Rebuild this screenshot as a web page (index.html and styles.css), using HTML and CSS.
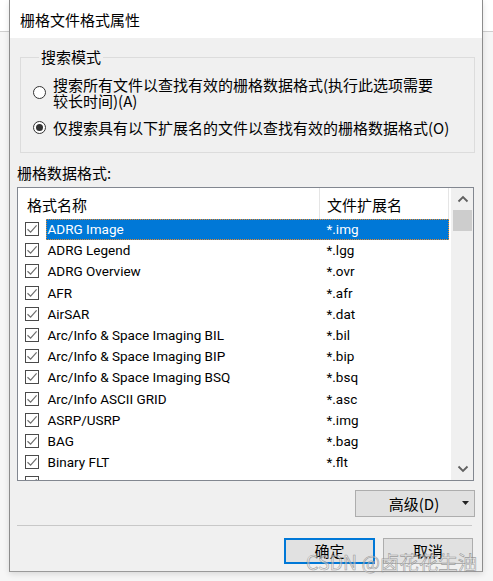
FILE: index.html
```html
<!DOCTYPE html>
<html lang="zh-CN">
<head>
<meta charset="utf-8">
<title>栅格文件格式属性</title>
<link rel="stylesheet" href="styles.css">
</head>
<body>
<div class="screen">
  <div class="dialog">
    <div class="titlebar">栅格文件格式属性</div>
    <div class="content">
      <fieldset class="group">
        <legend class="legend">搜索模式</legend>
        <div class="radio-row">
          <span class="radio"></span>
          <span class="radio-text">搜索所有文件以查找有效的栅格数据格式(执行此选项需要<br>较长时间)(A)</span>
        </div>
        <div class="radio-row second">
          <span class="radio checked"></span>
          <span class="radio-text">仅搜索具有以下扩展名的文件以查找有效的栅格数据格式(O)</span>
        </div>
      </fieldset>

      <div class="list-label">栅格数据格式:</div>

      <div class="listbox">
        <div class="list-main">
          <div class="list-header">
            <div class="hcol hname">格式名称</div>
            <div class="hcol hext">文件扩展名</div>
          </div>
          <div class="rows">
            <div class="row">
              <span class="check"><svg viewBox="0 0 14 14" width="14" height="14"><path d="M2.5 7.2 L5.6 10.2 L11.6 3.4" fill="none" stroke="#6e6e6e" stroke-width="1.2"/></svg></span>
              <div class="cells selected"><span class="cname">ADRG Image</span><span class="cext">*.img</span></div>
            </div>
            <div class="row">
              <span class="check"><svg viewBox="0 0 14 14" width="14" height="14"><path d="M2.5 7.2 L5.6 10.2 L11.6 3.4" fill="none" stroke="#6e6e6e" stroke-width="1.2"/></svg></span>
              <div class="cells"><span class="cname">ADRG Legend</span><span class="cext">*.lgg</span></div>
            </div>
            <div class="row">
              <span class="check"><svg viewBox="0 0 14 14" width="14" height="14"><path d="M2.5 7.2 L5.6 10.2 L11.6 3.4" fill="none" stroke="#6e6e6e" stroke-width="1.2"/></svg></span>
              <div class="cells"><span class="cname">ADRG Overview</span><span class="cext">*.ovr</span></div>
            </div>
            <div class="row">
              <span class="check"><svg viewBox="0 0 14 14" width="14" height="14"><path d="M2.5 7.2 L5.6 10.2 L11.6 3.4" fill="none" stroke="#6e6e6e" stroke-width="1.2"/></svg></span>
              <div class="cells"><span class="cname">AFR</span><span class="cext">*.afr</span></div>
            </div>
            <div class="row">
              <span class="check"><svg viewBox="0 0 14 14" width="14" height="14"><path d="M2.5 7.2 L5.6 10.2 L11.6 3.4" fill="none" stroke="#6e6e6e" stroke-width="1.2"/></svg></span>
              <div class="cells"><span class="cname">AirSAR</span><span class="cext">*.dat</span></div>
            </div>
            <div class="row">
              <span class="check"><svg viewBox="0 0 14 14" width="14" height="14"><path d="M2.5 7.2 L5.6 10.2 L11.6 3.4" fill="none" stroke="#6e6e6e" stroke-width="1.2"/></svg></span>
              <div class="cells"><span class="cname">Arc/Info &amp; Space Imaging BIL</span><span class="cext">*.bil</span></div>
            </div>
            <div class="row">
              <span class="check"><svg viewBox="0 0 14 14" width="14" height="14"><path d="M2.5 7.2 L5.6 10.2 L11.6 3.4" fill="none" stroke="#6e6e6e" stroke-width="1.2"/></svg></span>
              <div class="cells"><span class="cname">Arc/Info &amp; Space Imaging BIP</span><span class="cext">*.bip</span></div>
            </div>
            <div class="row">
              <span class="check"><svg viewBox="0 0 14 14" width="14" height="14"><path d="M2.5 7.2 L5.6 10.2 L11.6 3.4" fill="none" stroke="#6e6e6e" stroke-width="1.2"/></svg></span>
              <div class="cells"><span class="cname">Arc/Info &amp; Space Imaging BSQ</span><span class="cext">*.bsq</span></div>
            </div>
            <div class="row">
              <span class="check"><svg viewBox="0 0 14 14" width="14" height="14"><path d="M2.5 7.2 L5.6 10.2 L11.6 3.4" fill="none" stroke="#6e6e6e" stroke-width="1.2"/></svg></span>
              <div class="cells"><span class="cname">Arc/Info ASCII GRID</span><span class="cext">*.asc</span></div>
            </div>
            <div class="row">
              <span class="check"><svg viewBox="0 0 14 14" width="14" height="14"><path d="M2.5 7.2 L5.6 10.2 L11.6 3.4" fill="none" stroke="#6e6e6e" stroke-width="1.2"/></svg></span>
              <div class="cells"><span class="cname">ASRP/USRP</span><span class="cext">*.img</span></div>
            </div>
            <div class="row">
              <span class="check"><svg viewBox="0 0 14 14" width="14" height="14"><path d="M2.5 7.2 L5.6 10.2 L11.6 3.4" fill="none" stroke="#6e6e6e" stroke-width="1.2"/></svg></span>
              <div class="cells"><span class="cname">BAG</span><span class="cext">*.bag</span></div>
            </div>
            <div class="row">
              <span class="check"><svg viewBox="0 0 14 14" width="14" height="14"><path d="M2.5 7.2 L5.6 10.2 L11.6 3.4" fill="none" stroke="#6e6e6e" stroke-width="1.2"/></svg></span>
              <div class="cells"><span class="cname">Binary FLT</span><span class="cext">*.flt</span></div>
            </div>
            <div class="row">
              <span class="check"><svg viewBox="0 0 14 14" width="14" height="14"><path d="M2.5 7.2 L5.6 10.2 L11.6 3.4" fill="none" stroke="#6e6e6e" stroke-width="1.2"/></svg></span>
              <div class="cells"></div>
            </div>
          </div>
        </div>
        <div class="vscroll">
          <div class="sbtn"><svg viewBox="0 0 12 8" width="12" height="8"><path d="M1.5 6.5 L6 2 L10.5 6.5" fill="none" stroke="#606060" stroke-width="1.8"/></svg></div>
          <div class="sthumb"></div>
          <div class="strack"></div>
          <div class="sbtn"><svg viewBox="0 0 12 8" width="12" height="8"><path d="M1.5 1.5 L6 6 L10.5 1.5" fill="none" stroke="#606060" stroke-width="1.8"/></svg></div>
        </div>
      </div>

      <div class="adv-row">
        <div class="adv-btn">
          <span class="adv-text">高级(D)</span>
          <span class="adv-arrow"><svg viewBox="0 0 7 4" width="7" height="4"><path d="M0 0 H7 L3.5 4 Z" fill="#222"/></svg></span>
        </div>
      </div>

      <div class="separator"></div>

      <div class="button-row">
        <div class="btn default">确定</div>
        <div class="btn">取消</div>
      </div>
    </div>
  </div>
  <div class="watermark">CSDN @卤花花生油</div>
</div>
</body>
</html>
```

FILE: styles.css
```css
* { box-sizing: border-box; }

html, body {
  margin: 0;
  padding: 0;
}

body {
  width: 493px;
  height: 581px;
  overflow: hidden;
  font-family: "Noto Sans CJK SC", "Noto Sans", sans-serif;
  font-size: 15px;
  color: #000;
  background: #f3f3f3;
}

.screen {
  position: relative;
  width: 493px;
  height: 581px;
  background:
    linear-gradient(to bottom, #ffffff 0, #ffffff 31px, #cfcfcf 31px, #cfcfcf 32px, #f6f6f6 32px, #f6f6f6 100%);
  padding-left: 9px;
}

.dialog {
  width: 474px;
  height: 572px;
  background: #f0f0f0;
  border-left: 1px solid #8c8c8c;
  border-right: 1px solid #8c8c8c;
  border-bottom: 1px solid #9a9a9a;
  box-shadow: 0 2px 6px rgba(0,0,0,0.12);
  overflow: hidden;
}

.titlebar {
  height: 38px;
  background: #ffffff;
  padding-left: 10px;
  padding-top: 1px;
  line-height: 37px;
  font-size: 15px;
}

.content {
  padding: 0 8px 0 7px;
}

.group {
  margin: 9px -1px 0 3px;
  padding: 10px 0 16px 12px;
  border: 1px solid #dcdcdc;
  min-width: 0;
}

.legend {
  margin-left: 6px;
  padding: 0 2px;
  line-height: 20px;
  font-size: 15px;
}

.radio-row {
  display: flex;
  align-items: center;
  gap: 7px;
  line-height: 15.5px;
}

.radio-row.second {
  margin-top: 12px;
}

.radio {
  flex: none;
  width: 13px;
  height: 13px;
  border: 1px solid #333;
  border-radius: 50%;
  background: #fff;
  display: flex;
  align-items: center;
  justify-content: center;
}

.radio.checked::after {
  content: "";
  width: 7px;
  height: 7px;
  border-radius: 50%;
  background: #333;
}

.list-label {
  margin-top: 10px;
  line-height: 20px;
}

.listbox {
  margin-top: 4px;
  height: 294px;
  border: 1px solid #828790;
  background: #fff;
  display: flex;
}

.list-main {
  width: 433px;
  overflow: hidden;
}

.list-header {
  display: flex;
  height: 31px;
  line-height: 31px;
}

.hcol {
  padding-top: 1px;
}

.hname {
  width: 302px;
  padding-left: 9px;
  border-right: 1px solid #e5e5e5;
}

.hext {
  width: 129px;
  padding-left: 7px;
  border-right: 1px solid #e5e5e5;
}

.rows {
  height: 261px;
  overflow: hidden;
}

.row {
  display: flex;
  align-items: center;
  height: 21.2px;
  padding-left: 7px;
  font-family: Roboto, "Noto Sans", sans-serif;
  font-size: 13.5px;
}

.check {
  flex: none;
  width: 14px;
  height: 14px;
  border: 1px solid #4a4a4a;
  background: #fff;
  display: flex;
}

.check svg {
  margin: -1px;
}

.cells {
  margin-left: 6.5px;
  width: 403px;
  height: 21px;
  display: flex;
  align-items: center;
  border: 1px dotted transparent;
}

.cells.selected {
  background: #0078d7;
  color: #fff;
  border: 1px dotted #e8892c;
}

.cname {
  width: 273px;
  padding-left: 1px;
}

.cext {
  padding-left: 7px;
}

.vscroll {
  width: 22px;
  background: #f0f0f0;
  display: flex;
  flex-direction: column;
  padding-left: 1px;
}

.sbtn {
  height: 22px;
  display: flex;
  align-items: center;
  justify-content: center;
}

.sthumb {
  height: 21px;
  margin: 0 1px;
  background: #cdcdcd;
}

.strack {
  flex: 1;
}

.adv-row {
  display: flex;
  justify-content: flex-end;
  margin-top: 9px;
  margin-right: -1px;
}

.adv-btn {
  width: 120px;
  height: 27px;
  background: #e1e1e1;
  border: 1px solid #adadad;
  display: flex;
  align-items: center;
}

.adv-text {
  flex: 1;
  text-align: center;
  padding-left: 14px;
  line-height: 25px;
}

.adv-arrow {
  width: 16px;
  display: flex;
  justify-content: center;
  padding-right: 2px;
}

.separator {
  margin-top: 8px;
  margin-right: 2px;
  height: 1px;
  background: #c8c8c8;
}

.button-row {
  display: flex;
  justify-content: flex-end;
  gap: 8px;
  margin-top: 12px;
  margin-right: 1px;
}

.btn {
  width: 90px;
  height: 26px;
  background: #e1e1e1;
  border: 1px solid #adadad;
  text-align: center;
  line-height: 24px;
}

.btn.default {
  width: 91px;
  border: 2px solid #0078d7;
  line-height: 22px;
}

.watermark {
  position: absolute;
  left: 306px;
  top: 549px;
  font-size: 19.5px;
  line-height: 26px;
  white-space: nowrap;
  color: rgba(235, 235, 235, 0.5);
  -webkit-text-stroke: 0.6px rgba(120, 120, 120, 0.7);
}
```
